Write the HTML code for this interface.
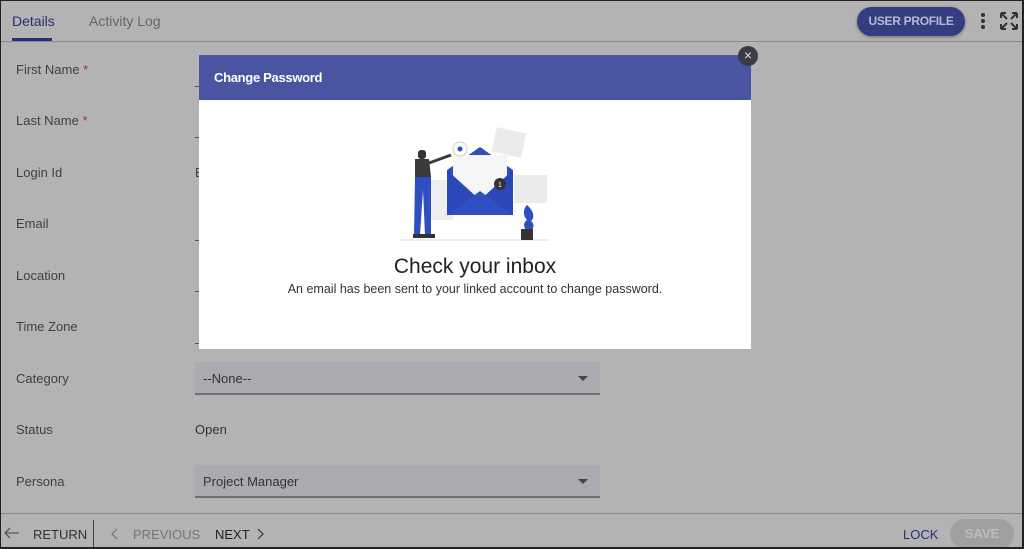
<!DOCTYPE html>
<html><head><style>
*{margin:0;padding:0;box-sizing:border-box}
body{width:1024px;height:549px;overflow:hidden;background:#b3b3b3;font-family:"Liberation Sans",sans-serif;position:relative;color:#3c3c3c}
.frame{position:absolute;inset:0;border:1px solid #222;border-right:2px solid #222;border-bottom:2px solid #222;pointer-events:none;z-index:10}
.a{position:absolute;white-space:nowrap}
.lbl{position:absolute;left:16px;font-size:13px;color:#404040}
.req{color:#a83030}
.ul{position:absolute;left:195px;width:5px;height:1px;background:#555}
.sel{position:absolute;left:195px;width:405px;height:33px;background:#a9abb1;border-bottom:2px solid #6e6f74;font-size:13px;color:#333;padding:9px 0 0 8px}
.sel:after{content:"";position:absolute;right:12px;top:14px;border:5px solid transparent;border-top:5px solid #444;border-bottom:0}
</style></head><body>
<div class="a" style="left:12px;top:13px;font-size:14px;color:#283070">Details</div>
<div style="position:absolute;left:12px;top:38px;width:40px;height:3px;background:#283070"></div>
<div class="a" style="left:89px;top:13px;font-size:14px;color:#666">Activity Log</div>
<div style="position:absolute;left:0;top:41px;width:1024px;height:1px;background:#8a8a8a"></div>
<div style="position:absolute;left:857px;top:7px;width:108px;height:29px;border-radius:15px;background:#333d80;box-shadow:0 1px 3px rgba(0,0,0,.4);color:#b8bbd0;font-size:12px;font-weight:bold;text-align:center;line-height:29px;letter-spacing:-.3px">USER PROFILE</div>
<div style="position:absolute;left:981px;top:13px;width:4px;height:4px;border-radius:2px;background:#333;box-shadow:0 6px 0 #333,0 12px 0 #333"></div>
<svg style="position:absolute;left:999px;top:11px" width="20" height="20" viewBox="0 0 20 20" stroke="#333" stroke-width="2" fill="none"><path d="M2 2l6 6M2 2h5M2 2v5M18 2l-6 6M18 2h-5M18 2v5M2 18l6-6M2 18h5M2 18v-5M18 18l-6-6M18 18h-5M18 18v-5"/></svg>

<div class="lbl" style="top:62px">First Name <span class="req">*</span></div>
<div class="lbl" style="top:113px">Last Name <span class="req">*</span></div>
<div class="lbl" style="top:165px">Login Id</div>
<div class="lbl" style="top:216px">Email</div>
<div class="lbl" style="top:268px">Location</div>
<div class="lbl" style="top:319px">Time Zone</div>
<div class="lbl" style="top:371px">Category</div>
<div class="lbl" style="top:422px">Status</div>
<div class="lbl" style="top:474px">Persona</div>
<div class="ul" style="top:86px"></div><div class="ul" style="top:137px"></div><div class="ul" style="top:240px"></div><div class="ul" style="top:291px"></div><div class="ul" style="top:343px"></div>
<div class="a" style="left:195px;top:165px;font-size:13px">E</div>
<div class="sel" style="top:362px">--None--</div>
<div class="a" style="left:195px;top:422px;font-size:13px;color:#333">Open</div>
<div class="sel" style="top:465px">Project Manager</div>

<div style="position:absolute;left:0;top:513px;width:1024px;height:1px;background:#8a8a8a"></div>
<svg style="position:absolute;left:4px;top:527px" width="16" height="12" viewBox="0 0 16 12" stroke="#555" stroke-width="1.3" fill="none"><path d="M15 6H1M6 1L1 6l5 5"/></svg>
<div class="a" style="left:33px;top:527px;font-size:13px;color:#333">RETURN</div>
<div style="position:absolute;left:93px;top:520px;width:1px;height:28px;background:#444"></div>
<svg style="position:absolute;left:111px;top:528px" width="8" height="12" viewBox="0 0 8 12" stroke="#777" stroke-width="1.3" fill="none"><path d="M6 1L1 6l5 5"/></svg>
<div class="a" style="left:133px;top:527px;font-size:13px;color:#777">PREVIOUS</div>
<div class="a" style="left:215px;top:527px;font-size:13px;color:#222">NEXT</div>
<svg style="position:absolute;left:256px;top:528px" width="8" height="12" viewBox="0 0 8 12" stroke="#444" stroke-width="1.3" fill="none"><path d="M2 1l5 5-5 5"/></svg>
<div class="a" style="left:903px;top:527px;font-size:13px;color:#283070">LOCK</div>
<div style="position:absolute;left:950px;top:519px;width:64px;height:30px;border-radius:15px;background:#a0a0a0;color:#bdbdbd;font-size:13px;font-weight:bold;text-align:center;line-height:30px">SAVE</div>

<div style="position:absolute;left:199px;top:55px;width:552px;height:294px;background:#fff">
 <div style="height:45px;background:#4a55a2;color:#fff;font-size:13px;font-weight:bold;padding:15px 0 0 15px;letter-spacing:-.3px">Change Password</div>
 <svg style="position:absolute;left:200px;top:70px" width="155" height="120" viewBox="0 0 155 120">
  <rect x="95" y="5" width="30" height="25" fill="#ebebeb" transform="rotate(12 110 17)"/>
  <rect x="115" y="50" width="33" height="28" fill="#ebebeb"/>
  <rect x="30" y="55" width="24" height="40" fill="#eee"/>
  <line x1="0" y1="115" x2="150" y2="115" stroke="#ddd"/>
  <path d="M48 45 L81 22 L114 45 L114 90 L48 90Z" fill="#2f4fc0"/>
  <rect x="54" y="30" width="54" height="40" fill="#f5f5f5"/>
  <path d="M48 45 L81 75 L114 45 L114 90 L48 90Z" fill="#2a48b8"/>
  <path d="M48 90 L81 66 L114 90Z" fill="#2f50c4"/>
  <circle cx="101" cy="59" r="6" fill="#333"/><text x="99" y="62" font-size="7" fill="#fff" font-family="Liberation Sans">1</text>
  <circle cx="61" cy="24" r="7" fill="none" stroke="#ccc"/><circle cx="61" cy="24" r="2.5" fill="#2f4fc0"/>
  <rect x="19" y="25" width="8" height="9" rx="3" fill="#333"/>
  <path d="M16 34h14l2 18h-16z" fill="#3a3a3a"/>
  <path d="M30 38l22-8" stroke="#3a3a3a" stroke-width="3"/>
  <path d="M16 52h16v58h-6l-2-45-3 45h-6z" fill="#2f4fc0"/>
  <rect x="14" y="109" width="10" height="4" fill="#333"/><rect x="24" y="109" width="12" height="4" fill="#333"/>
  <path d="M128 80c-5 5-3 12 0 15-5 3-3 10 2 12 5-2 6-8 2-11 4-3 3-10-4-16z" fill="#2f4fc0"/>
  <rect x="122" y="104" width="12" height="11" fill="#333"/>
 </svg>
 <div style="position:absolute;left:0;width:552px;top:200px;text-align:center;font-size:21px;color:#222">Check your inbox</div>
 <div style="position:absolute;left:0;width:552px;top:227px;text-align:center;font-size:12.5px;color:#333">An email has been sent to your linked account to change password.</div>
</div>
<div style="position:absolute;left:738px;top:46px;width:20px;height:20px;border-radius:10px;background:#3a3b48;color:#ddd;font-size:14px;text-align:center;line-height:19px">×</div>
<div class="frame"></div>
</body></html>
